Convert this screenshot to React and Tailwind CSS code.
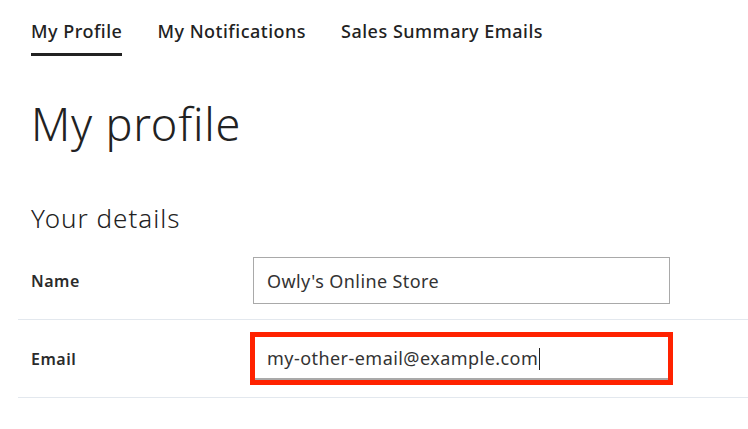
import React, { useState } from 'react';

const font = { fontFamily: '"Noto Sans", "Open Sans", sans-serif' };

const tabs = ['My Profile', 'My Notifications', 'Sales Summary Emails'];

function Row({ label, children }) {
  return (
    <div className="flex items-center border-b border-[#e3e8ee] py-[15px]">
      <div className="w-[235px] pl-[13px] text-[16px] font-semibold tracking-[0.5px] text-[#2b2b2b]">{label}</div>
      {children}
    </div>
  );
}

export default function App() {
  const [active] = useState(0);
  const [name, setName] = useState("Owly's Online Store");
  const email = 'my-other-email@example.com';

  return (
    <div className="w-[748px] h-[429px] bg-white overflow-hidden text-[#222]" style={font}>
      {/* Tabs */}
      <div className="flex gap-[35px] pl-[31px] pt-[18px]">
        {tabs.map((t, i) => (
          <div
            key={t}
            className={`pb-[9px] text-[18px] leading-[26px] font-medium tracking-[0.5px] text-[#222] border-b-[3px] ${
              i === active ? 'border-[#222]' : 'border-transparent'
            }`}
          >
            {t}
          </div>
        ))}
      </div>

      <h1 className="pl-[31px] mt-[40px] text-[45px] leading-[56px] font-light tracking-[0.8px] text-[#222]">
        My profile
      </h1>

      <h2 className="pl-[31px] mt-[50px] text-[26px] leading-[32px] font-light tracking-[1px] text-[#222]">
        Your details
      </h2>

      <div className="ml-[18px] mt-[8px]">
        <Row label="Name">
          <input
            value={name}
            onChange={(e) => setName(e.target.value)}
            className="w-[417px] h-[47px] border border-[#a9a9a9] px-[13px] text-[18px] tracking-[0.4px] text-[#333] outline-none"
            style={font}
          />
        </Row>
        <Row label="Email">
          {/* focused field, highlighted */}
          <div className="flex items-center w-[417px] h-[47px] border border-[#a9a9a9] px-[13px] outline-[5px] outline-solid outline-[#ff2200] -outline-offset-2 shadow-[inset_0_-3px_0_#a9a9a9]">
            <span className="text-[18px] tracking-[0.45px] text-[#333] whitespace-nowrap">{email}</span>
            <span className="ml-[1px] w-px h-[22px] bg-[#222]" />
          </div>
        </Row>
      </div>
    </div>
  );
}
